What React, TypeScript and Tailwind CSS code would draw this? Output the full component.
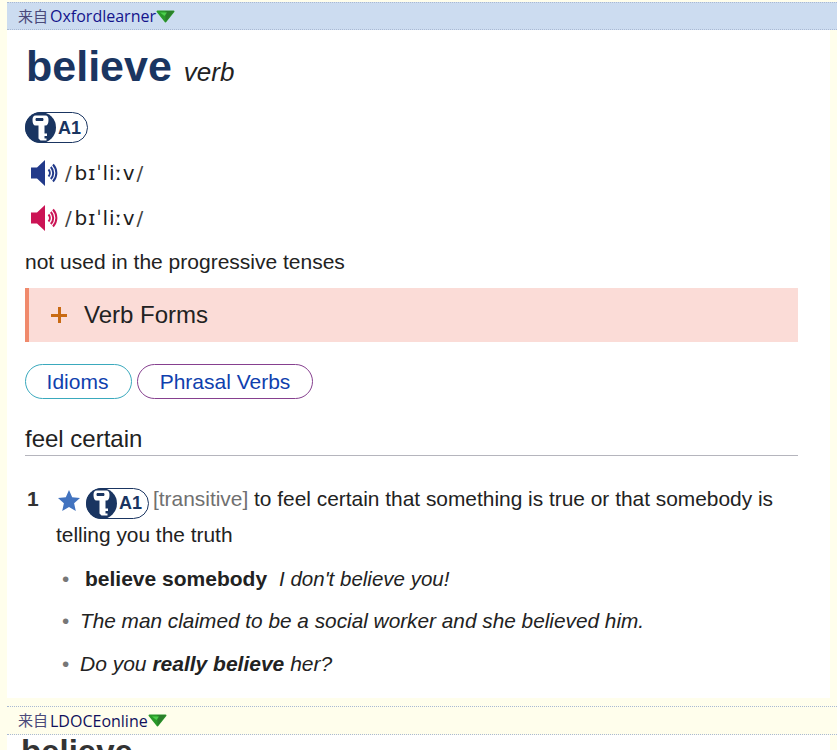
const SANS = "font-['Liberation_Sans',Arial,sans-serif]"

function SourceBar({ name, className, nameClass }: { name: string; className: string; nameClass: string }) {
  return (
    <div className={`ml-[7px] flex items-center pl-[11px] border-y border-dotted border-[#a9b9d3] text-[16px] ${className}`}>
      <span className="font-['Noto_Sans_CJK_SC',sans-serif] text-[15px] text-[#4a4a7a]">来自</span>
      <span className={`ml-[2px] font-['Open_Sans',sans-serif] ${nameClass}`}>{name}</span>
      <svg width="19" height="13" viewBox="0 0 19 13" className="shrink-0">
        <path d="M1.500 1.500H17.500L9.500 11.500Z" fill="#2a9a2a" stroke="#2a9a2a" strokeWidth="2" strokeLinejoin="round" />
        <path d="M9.500 1H18L9.500 12Z" fill="#2b7f2b" />
        <path d="M4 2.500H11L8.500 6Z" fill="#4ccf4c" />
      </svg>
    </div>
  )
}

function KeyBadge({ className = '' }: { className?: string }) {
  return (
    <span className={`inline-flex items-center w-[63px] h-[31px] rounded-full border border-[#1a3561] bg-white align-middle ${className}`}>
      <span className="w-[31px] h-[31px] -ml-px rounded-full bg-[#1a3561] flex items-center justify-center shrink-0">
        <svg width="20" height="26" viewBox="0 0 20 26">
          <path
            d="M4.500 0.500H14.500C16.500 0.500 17.500 2 17.500 5C17.500 8.500 16.500 10.500 14.500 10.500H13.500V18.500H16V21H13.500V23.500H15.500V25.500H9.500L7.500 23.500V10.500H4.500C2.500 10.500 1.500 8.500 1.500 5C1.500 2 2.500 0.500 4.500 0.500ZM5.500 3C4.800 3 4.500 3.600 4.500 4.500C4.500 5.400 4.800 6 5.500 6H11.500C12.200 6 12.500 5.400 12.500 4.500C12.500 3.600 12.200 3 11.500 3Z"
            fill="white"
            fillRule="evenodd"
          />
        </svg>
      </span>
      <span className="ml-[2px] text-[18px] font-bold text-[#1a3561] leading-none">A1</span>
    </span>
  )
}

function Speaker({ color }: { color: string }) {
  return (
    <svg width="28" height="28" viewBox="0 0 28 28" className="shrink-0">
      <path d="M1 8.500H7L15 1V27L7 19.500H1Z" fill={color} />
      <path d="M18.500 10.500C20.300 12.500 20.300 15.500 18.500 17.500M20.800 8C24 11.500 24 16.500 20.800 20M23 5.500C27.500 10.500 27.500 17.500 23 22.500" fill="none" stroke={color} strokeWidth="2" />
    </svg>
  )
}

function Pron({ color }: { color: string }) {
  return (
    <div className="flex items-center h-[28px] pl-[5px] gap-[7px]">
      <Speaker color={color} />
      <span className="font-['DejaVu_Sans',sans-serif] text-[20px] tracking-[0.8px] text-[#1c1c1c]">
        <span className="text-[#444] mr-[2px]">/</span>bɪˈliːv<span className="text-[#444] ml-[1px]">/</span>
      </span>
    </div>
  )
}

export default function App() {
  return (
    <div className={`${SANS} w-[837px] h-[750px] overflow-hidden bg-[#fffeec] pt-[2px] text-[#222]`}>
      <SourceBar name="Oxfordlearner" className="h-[28px] bg-[#ccdcf0]" nameClass="text-[#14148c]" />
      <div className="ml-[7px] mr-[7px] h-[668px] bg-white pl-[18px] pr-[32px]">
        <div className="flex items-baseline pt-[7px] leading-[58px]">
          <h1 className="ml-px text-[43px] font-bold text-[#1a3561]">believe</h1>
          <span className="ml-[12px] text-[26px] italic">verb</span>
        </div>
        <div className="mt-[11px] h-[31px] flex">
          <KeyBadge />
        </div>
        <div className="mt-[16px] flex flex-col gap-[17px]">
          <Pron color="#223a8a" />
          <Pron color="#cb1455" />
        </div>
        <p className="mt-[17px] text-[21px] leading-[26px]">not used in the progressive tenses</p>
        <div className="mt-[13px] h-[54px] flex items-center bg-[#fbdcd7] border-l-[4px] border-[#f08a6c] pl-[22px]">
          <span className="w-[16px] h-[16px] relative shrink-0">
            <span className="absolute left-0 right-0 top-[6.500px] h-[3px] bg-[#c96a12]" />
            <span className="absolute top-0 bottom-0 left-[6.500px] w-[3px] bg-[#c96a12]" />
          </span>
          <span className="ml-[17px] text-[24px] text-[#222]">Verb Forms</span>
        </div>
        <div className="mt-[22px] flex gap-[5px]">
          <span className="h-[35px] w-[107px] pr-[2px] rounded-full border border-[#3aa9bd] flex items-center justify-center text-[21px] text-[#0f3fae]">Idioms</span>
          <span className="h-[35px] w-[176px] rounded-full border border-[#86408f] flex items-center justify-center text-[21px] text-[#0f3fae]">Phrasal Verbs</span>
        </div>
        <div className="mt-[24px] h-[33px] border-b border-[#b5b5bd] text-[24px] leading-[32px]">feel certain</div>
        <div className="mt-[25px] flex">
          <span className="w-[31px] pl-[2px] font-bold text-[21px] leading-[36px] text-[#333]">1</span>
          <div className="flex-1 min-w-0">
            <p className="text-[20.900px] leading-[36px]">
              <svg width="22" height="21" viewBox="0 0 22 21" className="inline-block align-[-5px] ml-[2px] mr-[6px]">
                <path d="M11 0L14.200 7.200L22 8L16.100 13.200L17.800 21L11 17L4.200 21L5.900 13.200L0 8L7.800 7.200Z" fill="#4273bf" />
              </svg>
              <KeyBadge className="mr-[4px] translate-y-[3px]" />
              <span className="text-[#707070]">[transitive]</span> to feel certain that something is true or that somebody is telling you the truth
            </p>
            <ul className="text-[20.800px] leading-[26px]">
              <li className="mt-[13px] flex">
                <span className="w-[29px] pl-[6px] text-[#777]">•</span>
                <span><b className="font-bold text-[21px]">believe somebody</b><i className="ml-[12px] text-[20.500px]">I don&apos;t believe you!</i></span>
              </li>
              <li className="mt-[16px] flex italic">
                <span className="w-[24px] pl-[6px] text-[#777] not-italic">•</span>
                <span>The man claimed to be a social worker and she believed him.</span>
              </li>
              <li className="mt-[17px] flex italic">
                <span className="w-[24px] pl-[6px] text-[#777] not-italic">•</span>
                <span className="text-[21px]">Do you <b className="font-bold">really believe</b> her?</span>
              </li>
            </ul>
          </div>
        </div>
      </div>
      <div className="h-[8px]" />
      <SourceBar name="LDOCEonline" className="h-[29px] bg-[#fffeec]" nameClass="text-[#10105c]" />
      <div className="ml-[7px] mr-[7px] h-[60px] bg-white pl-[14px] pt-[2px]">
        <div className="text-[33px] font-bold text-[#333] leading-[30px]">believe</div>
      </div>
    </div>
  )
}
